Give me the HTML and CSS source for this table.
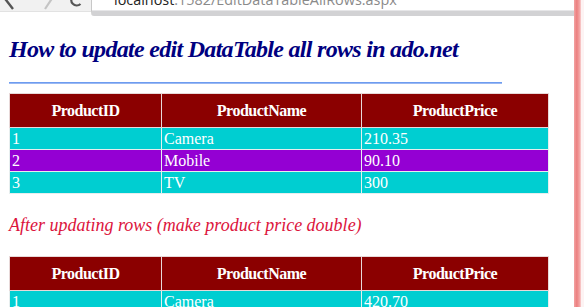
FILE: index.html
```html
<!DOCTYPE html>
<html>
<head>
<meta charset="utf-8">
<title>EditDataTableAllRows</title>
<link rel="stylesheet" href="styles.css">
</head>
<body>
<div class="window">
  <div class="main">
    <div class="chrome">
      <div class="nav">
        <svg class="icon back" width="16" height="22" viewBox="0 0 16 22"><path d="M11 2 L4 11 L11 20" fill="none" stroke="#555" stroke-width="2.4"/></svg>
        <svg class="icon fwd" width="12" height="22" viewBox="0 0 12 22"><path d="M3 2 L9 11 L3 20" fill="none" stroke="#c4c4c4" stroke-width="2.2"/></svg>
        <svg class="icon reload" width="14" height="22" viewBox="0 0 14 22"><path d="M11.5 7 A5.5 5.5 0 1 0 11.5 15" fill="none" stroke="#555" stroke-width="2.2"/></svg>
      </div>
      <div class="url">
        <svg class="globe" width="12" height="22" viewBox="0 0 12 22"><circle cx="6" cy="0" r="5" fill="none" stroke="#777" stroke-width="1.3"/><path d="M3 1 Q6 3 9 1" fill="none" stroke="#777" stroke-width="1"/></svg>
        <span class="host">localhost</span><span class="path">:1582/EditDataTableAllRows.aspx</span>
      </div>
    </div>
    <div class="content">
      <h2 class="title">How to update edit DataTable all rows in ado.net</h2>
      <hr class="rule">
      <table class="grid">
        <colgroup><col class="c1"><col class="c2"><col class="c3"></colgroup>
        <tr><th>ProductID</th><th>ProductName</th><th>ProductPrice</th></tr>
        <tr class="row"><td>1</td><td>Camera</td><td>210.35</td></tr>
        <tr class="alt"><td>2</td><td>Mobile</td><td>90.10</td></tr>
        <tr class="row"><td>3</td><td>TV</td><td>300</td></tr>
      </table>
      <p class="note">After updating rows (make product price double)</p>
      <table class="grid">
        <colgroup><col class="c1"><col class="c2"><col class="c3"></colgroup>
        <tr><th>ProductID</th><th>ProductName</th><th>ProductPrice</th></tr>
        <tr class="row"><td>1</td><td>Camera</td><td>420.70</td></tr>
        <tr class="alt"><td>2</td><td>Mobile</td><td>180.20</td></tr>
        <tr class="row"><td>3</td><td>TV</td><td>600</td></tr>
      </table>
    </div>
  </div>
  <div class="frame"></div>
  <div class="edge"></div>
</div>
</body>
</html>
```
FILE: styles.css
```css
html, body {
  margin: 0;
  padding: 0;
  background: #fff;
  overflow: hidden;
}
.window {
  display: flex;
  width: 584px;
  height: 307px;
  overflow: hidden;
}
.main {
  width: 574px;
  flex: none;
}
.frame {
  width: 7px;
  flex: none;
  background: linear-gradient(to right, #f3a3a3, #ec8080 40%, #f3a6a6 80%, #f9d3d3);
}
.edge {
  flex: 1;
  background: #fdf3f3;
}
.chrome {
  display: flex;
  height: 17px;
}
.nav {
  width: 91px;
  height: 11px;
  background: #f1f1f1;
  border-bottom: 1px solid #e2e2e2;
  display: flex;
  align-items: flex-start;
  overflow: hidden;
}
.icon {
  margin-top: -11px;
  flex: none;
}
.back { margin-left: 2px; }
.fwd { margin-left: 24px; }
.reload { margin-left: 15px; }
.url {
  flex: 1;
  height: 11px;
  background: #fff;
  border-left: 1px solid #c8c8c8;
  border-bottom: 5px solid #d2d2d4;
  border-bottom-left-radius: 3px;
  box-shadow: inset 0 -1px 0 #e6e6e8;
  display: flex;
  align-items: flex-start;
  overflow: hidden;
  font-family: "Open Sans", "Noto Sans", sans-serif;
  font-size: 14.4px;
  line-height: 20px;
}
.globe {
  margin: -11px 0 0 4px;
  flex: none;
}
.host {
  margin-top: -10px;
  margin-left: 6px;
  color: #222;
}
.path {
  margin-top: -10px;
  color: #8a8a8a;
}
.content {
  padding: 18px 0 0 9px;
}
.title {
  margin: 0;
  font-family: "Liberation Serif", "Times New Roman", serif;
  font-size: 24px;
  line-height: 28px;
  font-style: italic;
  font-weight: bold;
  letter-spacing: -0.7px;
  color: #000080;
}
.rule {
  margin: 19px 0 9px 0;
  width: 493px;
  height: 0;
  border: 0;
  border-top: 1px solid #6d9cf0;
  border-bottom: 1px solid #9ab8f2;
}
.grid {
  border-collapse: collapse;
  width: 539px;
  table-layout: fixed;
  font-family: "Liberation Serif", "Times New Roman", serif;
  font-size: 16px;
  color: #fff;
}
.c1 { width: 152px; }
.c2 { width: 200px; }
.c3 { width: 187px; }
.grid th {
  background: #8b0000;
  height: 33px;
  padding: 0;
  font-weight: bold;
  letter-spacing: -0.5px;
  text-align: center;
  border: 1px solid #e8d8d8;
}
.grid td {
  height: 21px;
  padding: 0 2px;
  border: 1px solid #e6eeee;
  text-align: left;
}
.row td { background: #00ced1; }
.alt td { background: #9400d3; }
.note {
  margin: 20px 0 20px 0;
  font-family: "Liberation Serif", "Times New Roman", serif;
  font-style: italic;
  font-size: 18px;
  line-height: 22px;
  color: #dc143c;
}
```
